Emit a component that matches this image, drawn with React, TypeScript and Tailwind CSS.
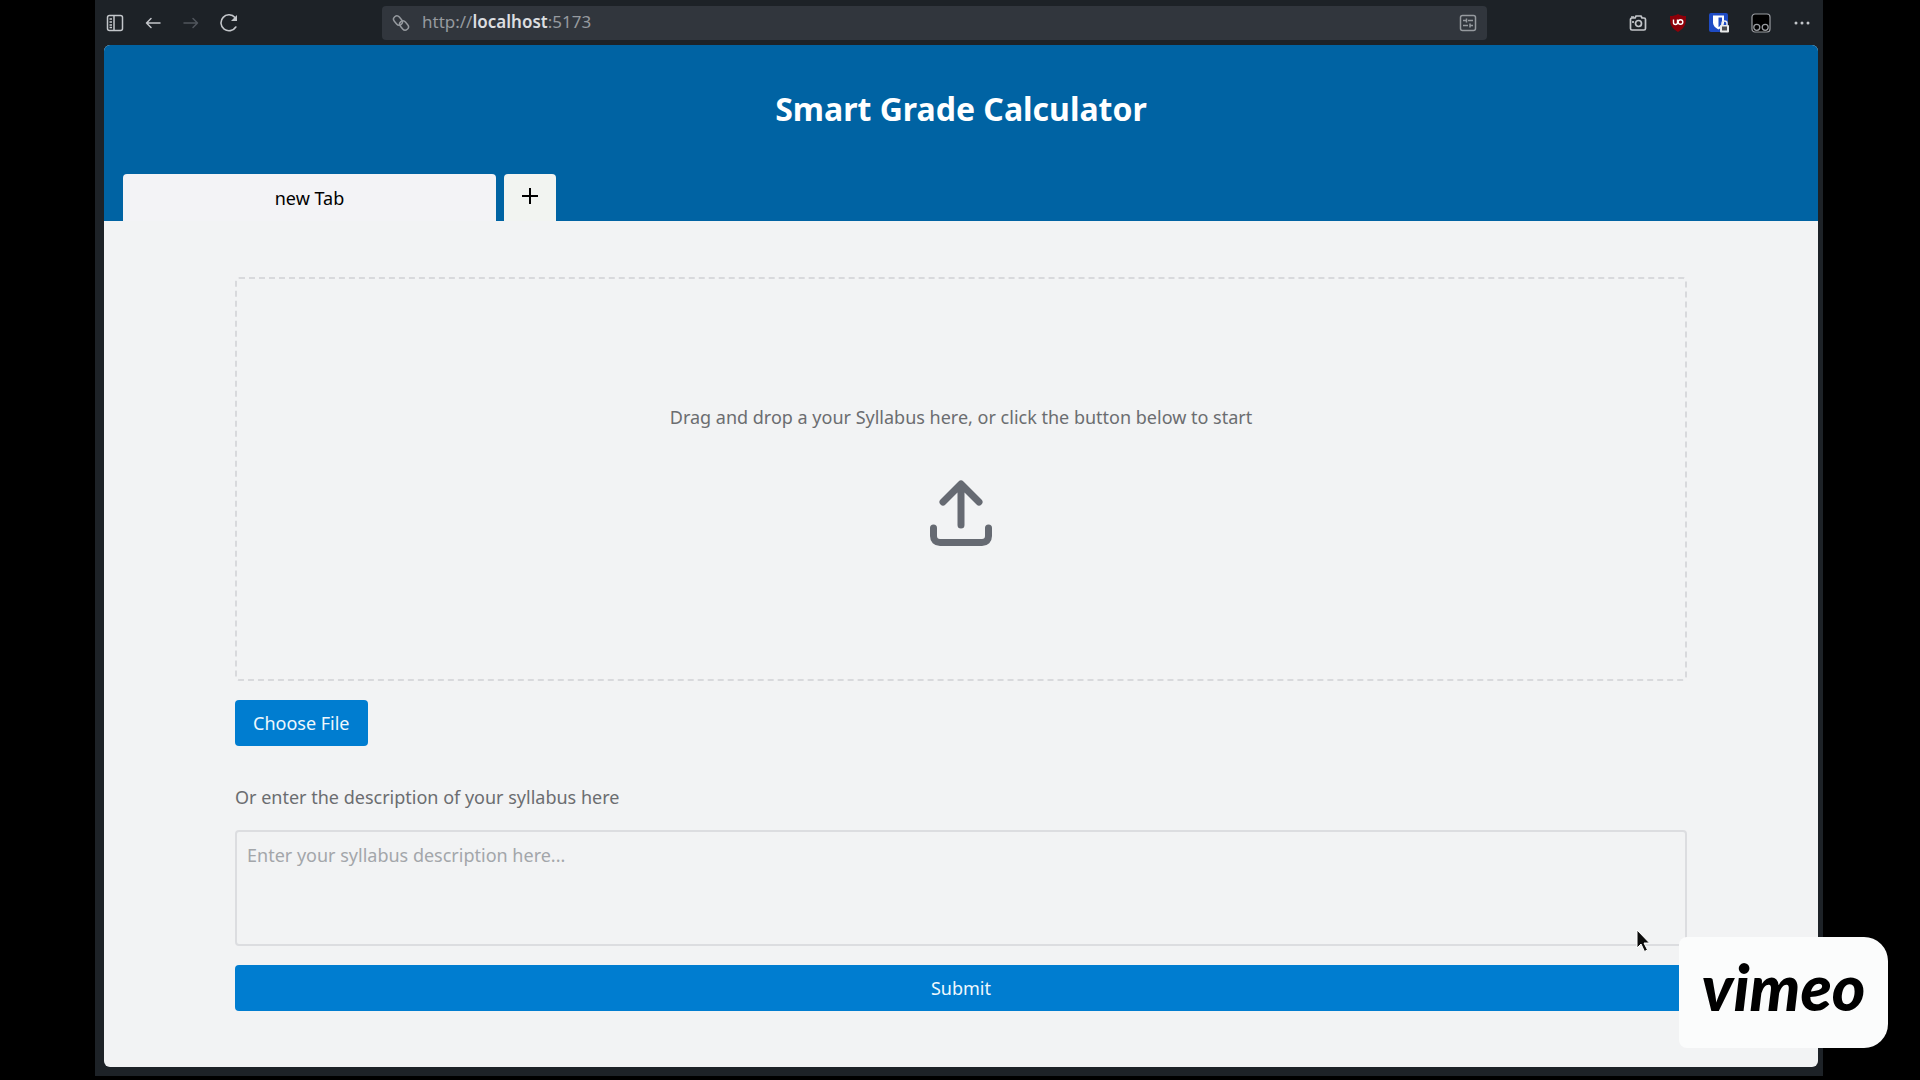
import React, { useState } from 'react'

const UploadIcon = () => (
  <svg
    className="w-16 h-[68px] text-[#666a72]"
    viewBox="0 0 64 68"
    fill="none"
    stroke="currentColor"
    strokeWidth="7"
    strokeLinecap="round"
    strokeLinejoin="round"
    aria-hidden="true"
  >
    <path d="M14 23 32 5l18 18M32 6v40" />
    <path d="M4.500 49v8c0 4 2.500 6.500 6.500 6.500h42c4 0 6.500-2.500 6.500-6.500v-8" />
  </svg>
)

const SidebarIcon = () => (
  <svg width="18" height="18" viewBox="0 0 18 18" fill="none" stroke="currentColor" strokeWidth="1.5" aria-hidden="true">
    <rect x="1.5" y="1.5" width="15" height="15" rx="2" />
    <path d="M8 1.5v15M3.5 5H6M3.5 8H6M3.5 11H6M3.5 13.5H6" />
  </svg>
)

const BackIcon = () => (
  <svg width="18" height="18" viewBox="0 0 18 18" fill="none" stroke="currentColor" strokeWidth="1.5" strokeLinecap="round" strokeLinejoin="round" aria-hidden="true">
    <path d="M16 9H2.5M7 4.5 2.500 9 7 13.5" />
  </svg>
)

const ForwardIcon = () => (
  <svg width="18" height="18" viewBox="0 0 18 18" fill="none" stroke="currentColor" strokeWidth="1.5" strokeLinecap="round" strokeLinejoin="round" aria-hidden="true">
    <path d="M2 9h13.5M11 4.5 15.500 9 11 13.5" />
  </svg>
)

const ReloadIcon = () => (
  <svg width="18" height="18" viewBox="0 0 18 18" fill="none" stroke="currentColor" strokeWidth="1.6" strokeLinecap="round" aria-hidden="true">
    <path d="M15.8 13A8 8 0 1 1 15 3.5" />
    <path d="M17 1v6h-6Z" fill="currentColor" stroke="none" />
  </svg>
)

const LinkIcon = () => (
  <svg width="18" height="18" viewBox="0 0 18 18" fill="none" stroke="currentColor" strokeWidth="1.5" aria-hidden="true">
    <rect x="1" y="3.3" width="10" height="6.5" rx="3.25" transform="rotate(50 6 6.5)" />
    <rect x="7" y="8.2" width="10" height="6.5" rx="3.25" transform="rotate(50 12 11.5)" />
  </svg>
)

const TuneIcon = () => (
  <svg width="18" height="18" viewBox="0 0 18 18" fill="none" stroke="currentColor" strokeWidth="1.5" aria-hidden="true">
    <rect x="1.5" y="1.5" width="15" height="15" rx="2" />
    <path d="M4 6.5h3M9 6.5h5M7.5 4.5v4M4 11.5h5M11 11.5h3M11 9.5v4" />
  </svg>
)

const CameraIcon = () => (
  <svg width="18" height="18" viewBox="0 0 18 18" fill="none" stroke="currentColor" strokeWidth="1.7" strokeLinejoin="round" aria-hidden="true">
    <path d="M1.5 5.5A1.5 1.5 0 0 1 3 4h3l1-2h5l1 2h2a1.500 1.500 0 0 1 1.500 1.500v9A1.500 1.500 0 0 1 15 16H3a1.500 1.500 0 0 1-1.500-1.500Z" />
    <circle cx="9.5" cy="9.5" r="3" />
    <path d="M2 3h3M4 7v2" />
  </svg>
)

const BlockerIcon = () => (
  <svg width="18" height="18" viewBox="0 0 18 18" fill="none" aria-hidden="true">
    <path d="M9 0c2.5 1.6 5 2 8 2 0 8-.5 11.5-8 16C1.500 13.500 1 10 1 2c3 0 5.500-.4 8-2Z" fill="#8c0009" />
    <path d="M4.500 5.500v3a2 2 0 0 0 4 0v-3" stroke="#fff" strokeWidth="1.4" />
    <circle cx="11.5" cy="8" r="2.3" stroke="#fff" strokeWidth="1.4" />
  </svg>
)

const VaultIcon = () => (
  <svg width="20" height="20" viewBox="0 0 20 20" fill="none" aria-hidden="true">
    <rect width="19" height="19" rx="2" fill="#1e4bc4" />
    <path d="M4 2.500h11v7c0 3-2 5-5.500 7C6 14.500 4 12.500 4 9.500Z" fill="#fff" />
    <path d="M9.500 4.500H13v5c0 2-1.500 3.500-3.500 4.500Z" fill="#1e4bc4" />
    <rect x="11" y="12" width="9" height="7.5" rx="1" fill="#e8eaea" />
    <path d="M13 12v-1.500a2.500 2.500 0 0 1 5 0V12" stroke="#e8eaea" strokeWidth="1.5" />
    <rect x="13" y="13.5" width="5" height="4" fill="#4a4d50" />
  </svg>
)

const MonkeyIcon = () => (
  <svg width="20" height="20" viewBox="0 0 20 20" fill="none" stroke="#9a9da2" aria-hidden="true">
    <rect x="1" y="1" width="18" height="18" rx="3" fill="#000" strokeWidth="1.2" />
    <circle cx="5.8" cy="14.3" r="3" strokeWidth="1.3" />
    <circle cx="14.2" cy="14.3" r="3" strokeWidth="1.3" />
  </svg>
)

const MoreIcon = () => (
  <svg width="18" height="18" viewBox="0 0 18 18" fill="currentColor" aria-hidden="true">
    <circle cx="3" cy="9" r="1.5" />
    <circle cx="9" cy="9" r="1.5" />
    <circle cx="15" cy="9" r="1.5" />
  </svg>
)

const Cursor = () => (
  <svg className="absolute -bottom-2 right-9" width="16" height="26" viewBox="0 0 16 26" aria-hidden="true">
    <path d="M2 2v18l4-4 3.500 7.500 3-1.500L9 15h5.500Z" fill="#0c0c0c" stroke="#fff" strokeWidth="1" />
  </svg>
)

const Toolbar = () => (
  <div className="h-[45px] flex items-center text-[#c3c6ca]">
    <div className="w-[287px] pl-[11px] flex gap-5">
      <button type="button" aria-label="Sidebar"><SidebarIcon /></button>
      <button type="button" aria-label="Back"><BackIcon /></button>
      <button type="button" aria-label="Forward" disabled className="text-[#50555c]"><ForwardIcon /></button>
      <button type="button" aria-label="Reload"><ReloadIcon /></button>
    </div>
    <a
      href="http://localhost:5173"
      className="h-[34px] flex-1 flex items-center px-[10px] rounded bg-[#31363d] text-[#969a9f] text-[17px]"
    >
      <LinkIcon />
      <span className="flex-1 pl-3">
        http://<b className="font-semibold text-[#dcdee0]">localhost</b>:5173
      </span>
      <TuneIcon />
    </a>
    <div className="w-[336px] pr-3 flex items-center justify-end gap-[22px]">
      <button type="button" aria-label="Screenshot"><CameraIcon /></button>
      <button type="button" aria-label="Ad blocker"><BlockerIcon /></button>
      <button type="button" aria-label="Passwords"><VaultIcon /></button>
      <button type="button" aria-label="User scripts"><MonkeyIcon /></button>
      <button type="button" aria-label="More"><MoreIcon /></button>
    </div>
  </div>
)

const App = () => {
  const [description, setDescription] = useState('')

  return (
    <div className="min-h-screen bg-black pl-[95px] pr-[97px] pb-1 flex flex-col font-['Noto_Sans',sans-serif] text-lg">
      <div className="flex-1 flex flex-col bg-[#1d2227] pb-[9px]">
        <Toolbar />

        <div className="flex-1 flex flex-col ml-[9px] mr-[5px] rounded-md overflow-hidden bg-[#f2f3f4]">
          <header className="h-44 flex flex-col justify-between bg-[#0063a3]">
            <h1 className="pt-10 text-center text-[32px] leading-[48px] font-bold text-white">
              Smart Grade Calculator
            </h1>
            <div className="flex gap-2 pl-[19px] text-black">
              <button type="button" className="w-[373px] h-[47px] rounded-t bg-[#f3f3f6]">
                new Tab
              </button>
              <button
                type="button"
                aria-label="Add tab"
                className="w-[52px] h-[47px] pb-1 flex items-center justify-center rounded-t bg-[#f2f4f1]"
              >
                <svg width="16" height="16" viewBox="0 0 16 16" stroke="currentColor" strokeWidth="2" aria-hidden="true">
                  <path d="M8 0v16M0 8h16" />
                </svg>
              </button>
            </div>
          </header>

          <main className="px-[131px] pt-14 flex flex-col items-start text-[#6b6d70]">
            <div className="w-full h-[404px] pb-2 flex flex-col items-center justify-center gap-12 rounded border-2 border-dashed border-[#d8d9dc]">
              <p>Drag and drop a your Syllabus here, or click the button below to start</p>
              <UploadIcon />
            </div>
            <button type="button" className="mt-[19px] h-[46px] px-[18px] rounded bg-[#007dd0] text-[#eef8fd]">
              Choose File
            </button>
            <label htmlFor="description" className="mt-9 leading-[30px]">
              Or enter the description of your syllabus here
            </label>
            <div className="relative w-full mt-[18px]">
              <textarea
                id="description"
                value={description}
                onChange={event => setDescription(event.target.value)}
                placeholder="Enter your syllabus description here..."
                className="block w-full h-[116px] px-[10px] py-[9px] resize-none rounded border-2 border-[#dcdde0] placeholder:text-[#a3a6aa]"
              />
              <Cursor />
            </div>
            <button type="button" className="w-full mt-[19px] h-[46px] rounded bg-[#007dd0] text-[#eef8fd]">
              Submit
            </button>
          </main>
        </div>
      </div>

      <a
        href="#vimeo"
        className="fixed right-8 bottom-8 w-[209px] h-[111px] pb-3 flex items-center justify-center rounded-r-3xl rounded-l-lg bg-[#fbfcfc] text-black font-['Lato',sans-serif] font-black italic text-[64px] leading-none"
      >
        vimeo
      </a>
    </div>
  )
}

export default App
